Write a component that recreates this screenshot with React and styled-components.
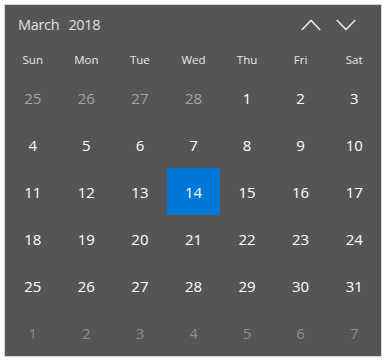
import React from "react";
import styled, { createGlobalStyle } from "styled-components";

const Global = createGlobalStyle`
  html, body { margin: 0; padding: 0; background: #ffffff; }
  body { font-family: "Open Sans", "Noto Sans", sans-serif; }
`;

const Page = styled.div`
  padding: 4px;
  width: 387px;
  box-sizing: border-box;
`;

const Panel = styled.div`
  width: 378px;
  height: 353px;
  box-sizing: border-box;
  border: 1px solid #d6d6d6;
  background: #555555;
  display: flex;
  flex-direction: column;
`;

const Header = styled.div`
  height: 40px;
  display: flex;
  align-items: center;
  justify-content: space-between;
  padding: 0 25px 0 13px;
`;

const Title = styled.div`
  display: flex;
  font-size: 14.5px;
  letter-spacing: -0.3px;
  color: #e0e0e0;
`;

const Year = styled.span`
  margin-left: 9px;
`;

const Arrows = styled.div`
  display: flex;
  gap: 15px;
  align-items: center;
`;

const ArrowBtn = styled.svg`
  width: 20px;
  height: 12px;
  display: block;
`;

const Grid = styled.div`
  display: grid;
  grid-template-columns: repeat(7, 1fr);
  padding-left: 1px;
`;

const WeekDay = styled.div`
  height: 30px;
  display: flex;
  align-items: center;
  justify-content: center;
  font-size: 11.5px;
  color: #e8e8e8;
`;

const Day = styled.div`
  height: 47px;
  display: flex;
  align-items: center;
  justify-content: center;
  font-size: 15px;
  color: ${(p) => (p.$muted === 1 ? "#a3a3a3" : p.$muted === 2 ? "#8c8c8c" : "#ffffff")};
  background: ${(p) => (p.$selected ? "#0078d7" : "transparent")};
`;

const weekdays = ["Sun", "Mon", "Tue", "Wed", "Thu", "Fri", "Sat"];

const days = [];
[25, 26, 27, 28].forEach((d) => days.push({ d, m: 1 }));
for (let i = 1; i <= 31; i++) days.push({ d: i, m: 0 });
for (let i = 1; i <= 7; i++) days.push({ d: i, m: 2 });

export default function App() {
  return (
    <Page>
      <Global />
      <Panel>
        <Header>
          <Title>
            <span>March</span>
            <Year>2018</Year>
          </Title>
          <Arrows>
            <ArrowBtn viewBox="0 0 20 12">
              <polyline points="0.8,11 10,1.5 19.2,11" fill="none" stroke="#e6e6e6" strokeWidth="1.6" />
            </ArrowBtn>
            <ArrowBtn viewBox="0 0 20 12">
              <polyline points="0.8,1 10,10.5 19.2,1" fill="none" stroke="#e6e6e6" strokeWidth="1.6" />
            </ArrowBtn>
          </Arrows>
        </Header>
        <Grid>
          {weekdays.map((w) => (
            <WeekDay key={w}>{w}</WeekDay>
          ))}
          {days.map((x, i) => (
            <Day key={i} $muted={x.m} $selected={x.m === 0 && x.d === 14}>
              {x.d}
            </Day>
          ))}
        </Grid>
      </Panel>
    </Page>
  );
}
